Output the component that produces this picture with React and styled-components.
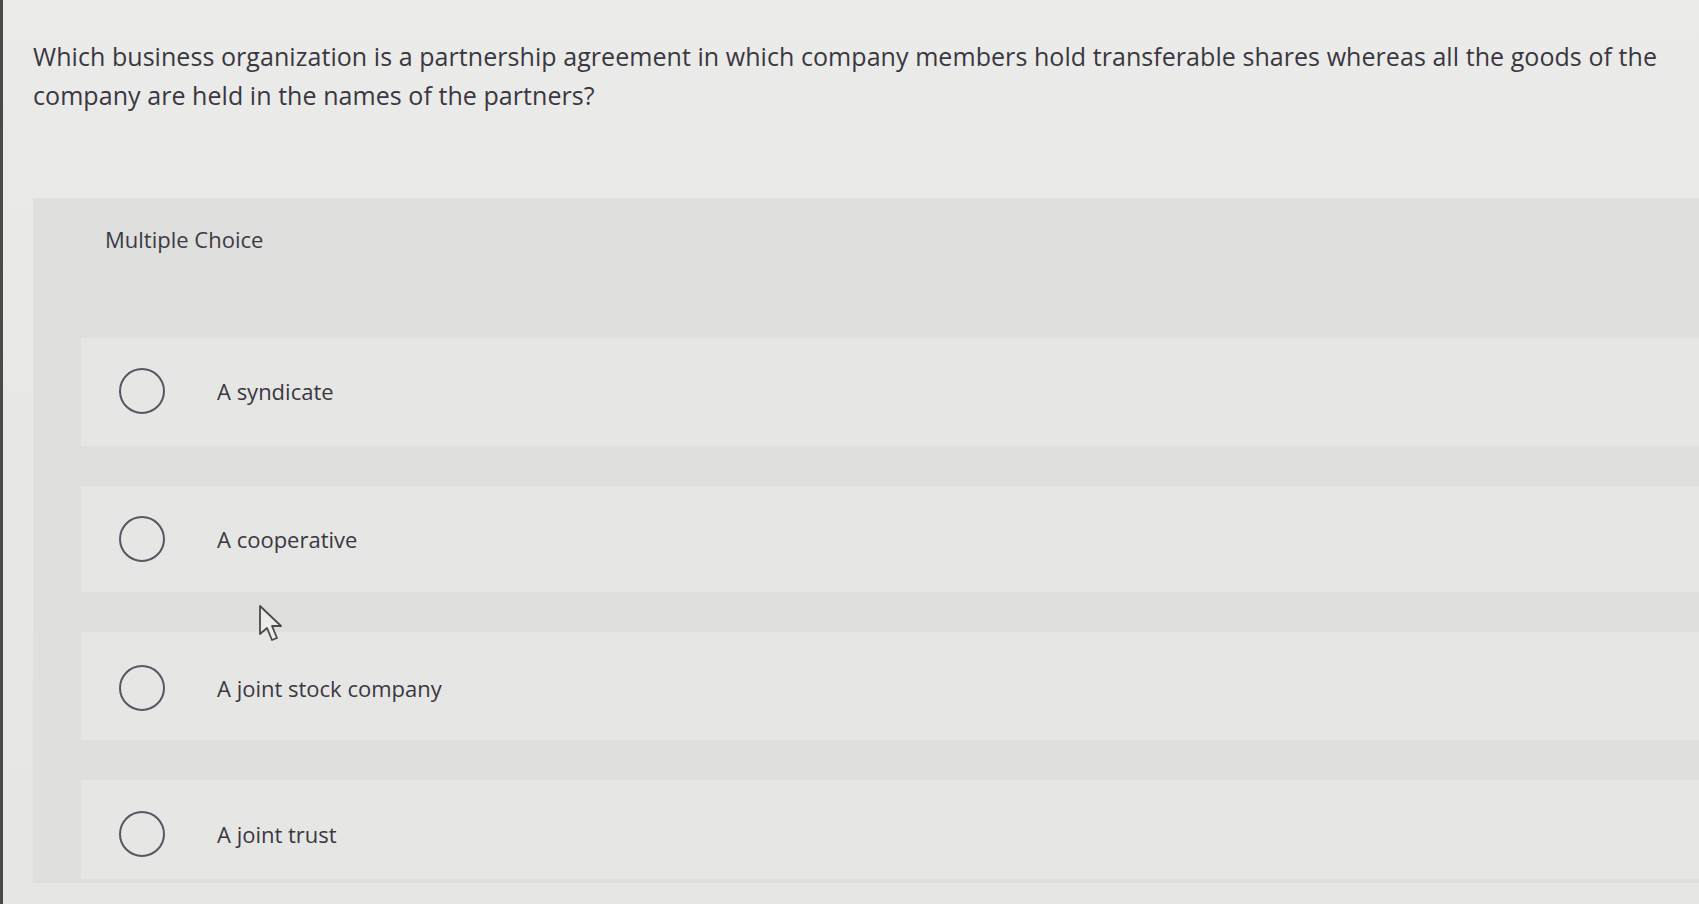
import React from "react";
import styled, { createGlobalStyle } from "styled-components";

const GlobalStyle = createGlobalStyle`
  html, body {
    margin: 0;
    padding: 0;
    background: #e8e8e6;
  }
  body {
    font-family: "Open Sans", "Lato", sans-serif;
    color: #3c3944;
  }
  * { box-sizing: border-box; }
`;

const Page = styled.div`
  position: relative;
  width: 1699px;
  height: 904px;
  overflow: hidden;
  background: linear-gradient(180deg, #ebebe9 0%, #e8e8e6 40%, #e6e6e4 100%);
  border-left: 3px solid #4a4a4a;
  display: flex;
  flex-direction: column;
`;

const Question = styled.p`
  margin: 37px 20px 0 30px;
  font-size: 25px;
  line-height: 39px;
  color: #3a3742;
  letter-spacing: 0.06px;
`;

const Panel = styled.section`
  margin: 83px 0 0 30px;
  background: #dfdfdd;
  display: flex;
  flex-direction: column;
  height: 685px;
`;

const Header = styled.div`
  height: 86px;
  padding: 27px 0 0 72px;
  font-size: 22px;
  line-height: 28px;
  color: #3d3a46;
`;

const Options = styled.ul`
  list-style: none;
  margin: 54px 0 0 48px;
  padding: 0;
  display: flex;
  flex-direction: column;
  gap: 40px;
`;

const Option = styled.li`
  height: ${(p) => p.$h}px;
  background: #e6e6e4;
  display: flex;
  align-items: center;
  padding-left: 38px;
`;

const Radio = styled.span`
  width: 46px;
  height: 46px;
  border-radius: 50%;
  border: 2.5px solid #5a5562;
  flex: none;
  margin-top: ${(p) => p.$dy || 0}px;
`;

const Label = styled.span`
  margin-left: 52px;
  font-size: 22px;
  color: #3a3742;
  margin-top: ${(p) => p.$dy || 0}px;
`;

const Cursor = styled.svg`
  position: absolute;
  left: 254px;
  top: 604px;
  width: 30px;
  height: 40px;
`;

const options = [
  { text: "A syndicate", h: 108, dy: -2 },
  { text: "A cooperative", h: 106, dy: 0 },
  { text: "A joint stock company", h: 108, dy: 4 },
  { text: "A joint trust", h: 99, dy: 8 },
];

export default function App() {
  return (
    <>
      <GlobalStyle />
      <Page>
        <Question>
          Which business organization is a partnership agreement in which company members hold
          transferable shares whereas all the goods of the company are held in the names of the
          partners?
        </Question>
        <Panel>
          <Header>Multiple Choice</Header>
          <Options>
            {options.map((o) => (
              <Option key={o.text} $h={o.h}>
                <Radio $dy={o.dy} />
                <Label $dy={o.dy}>{o.text}</Label>
              </Option>
            ))}
          </Options>
        </Panel>
        <Cursor viewBox="0 0 14 20">
          <path
            d="M1 1 L1 15 L4.5 12 L7 18 L9.5 17 L7 11 L11.5 11 Z"
            fill="#ecece9"
            stroke="#4a4a4a"
            strokeWidth="0.9"
            strokeLinejoin="round"
          />
        </Cursor>
      </Page>
    </>
  );
}
